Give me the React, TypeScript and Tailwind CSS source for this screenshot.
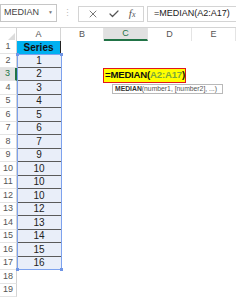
import { X, Check } from "lucide-react";

const values = [1, 2, 3, 4, 5, 6, 7, 9, 10, 10, 10, 12, 13, 14, 15, 16];
const cols = [
	{ id: "B", w: "w-[43px]" },
	{ id: "C", w: "w-[44px]" },
	{ id: "D", w: "w-[44px]" },
	{ id: "E", w: "w-[44px]" },
];

function Toolbar() {
	return (
		<div className="h-[27px] flex items-center bg-white">
			<div className="w-[57px] h-[18px] border border-[#c6c6c6] flex items-center justify-between pl-[3px] pr-[3px] -mt-[1px]">
				<span className="text-[9px] text-[#444]">MEDIAN</span>
				<span className="text-[5px] text-[#777]">▼</span>
			</div>
			<div className="w-[21px] flex justify-center text-[9px] text-[#bbb] leading-none">⋮</div>
			<div className="w-[66px] h-[16px] border border-[#d4d4d4] flex items-center justify-around px-[3px]">
				<X size={12} strokeWidth={1.6} className="text-[#555]" />
				<Check size={12} strokeWidth={2.4} className="text-[#555]" />
				<span className="text-[11px] italic text-[#555] font-['Liberation_Serif',serif]">
					f<span className="text-[8px]">x</span>
				</span>
			</div>
			<div className="flex-1 h-[16px] ml-[3px] border border-[#d4d4d4] border-r-0 flex items-center pl-[6px] text-[9px] text-[#222]">
				=MEDIAN(A2:A17)
			</div>
		</div>
	);
}

function HeaderRow() {
	return (
		<div className="flex h-[13.5px] border-t border-[#d4d4d4] text-[9px] text-[#555] bg-white">
			<div className="w-[17px] border-r border-[#d4d4d4] relative">
				<div className="absolute right-[1px] bottom-[1px] w-0 h-0 border-l-[7px] border-l-transparent border-b-[7px] border-b-[#dcdcdc]" />
			</div>
			<div className="w-[44px] border-r border-[#d4d4d4] flex items-center justify-center">A</div>
			{cols.map((c) => (
				<div
					key={c.id}
					className={`${c.w} flex items-center justify-center border-r border-[#e4e4e4] ${
						c.id === "C" ? "bg-[#e1e1e1] text-[#217346] border-b-2 border-b-[#217346]" : ""
					}`}
				>
					{c.id}
				</div>
			))}
		</div>
	);
}

export default function App() {
	return (
		<div className="w-[236px] h-[300px] bg-white overflow-hidden font-['Liberation_Sans',sans-serif] relative">
			<Toolbar />
			<HeaderRow />
			<div className="flex flex-col">
				{Array.from({ length: 19 }, (_, i) => {
					const row = i + 1;
					const active = row === 3;
					return (
						<div key={row} className="flex h-[13.5px]">
							<div
								className={`w-[17px] flex items-center justify-center text-[9px] border-b border-[#e4e4e4] ${
									active
										? "bg-[#e1e1e1] text-[#217346] border-r-2 border-r-[#217346]"
										: "text-[#555] border-r border-r-[#d4d4d4]"
								}`}
							>
								{row}
							</div>
							{row === 1 ? (
								<div className="w-[44px] bg-[#00b0f0] border-r border-[#222] flex items-center justify-center text-[10px] font-bold text-[#111]">
									Series
								</div>
							) : row <= 17 ? (
								<div className="w-[44px] bg-[#e9eef9] border-b-[1.5px] border-[#5a5a5a] flex items-center justify-center text-[10px] text-[#222]">
									{values[row - 2]}
								</div>
							) : (
								<div className="w-[44px]" />
							)}
						</div>
					);
				})}
			</div>

			{/* selection range A2:A17 */}
			<div className="absolute left-[16.5px] top-[54px] w-[45px] h-[216px] border-[1.5px] border-[#7da2ee] pointer-events-none" />
			{[
				"left-[15.5px] top-[52.5px]",
				"left-[59.5px] top-[52.5px]",
				"left-[15.5px] top-[268px]",
				"left-[59.5px] top-[268px]",
			].map((p) => (
				<div key={p} className={`absolute ${p} w-[3px] h-[3px] bg-[#6f95e6]`} />
			))}

			{/* editing cell */}
			<div className="absolute left-[103px] top-[68px] h-[15px] w-[83px] bg-[#ffff00] border-[1.5px] border-[#e0161a] flex items-center px-[1px] text-[9.6px] font-bold tracking-[-0.2px] text-[#111] whitespace-nowrap">
				=MEDIAN(<span className="text-[#7aa83a]">A2:A17</span>)
			</div>
			<div className="absolute left-[112px] top-[84px] h-[10px] w-[111px] bg-white border border-[#b9b9b9] flex items-center px-[2px] text-[6.8px] text-[#555] whitespace-nowrap">
				<span className="font-bold text-[#333]">MEDIAN</span>(number1, [number2], ...)
			</div>
		</div>
	);
}
